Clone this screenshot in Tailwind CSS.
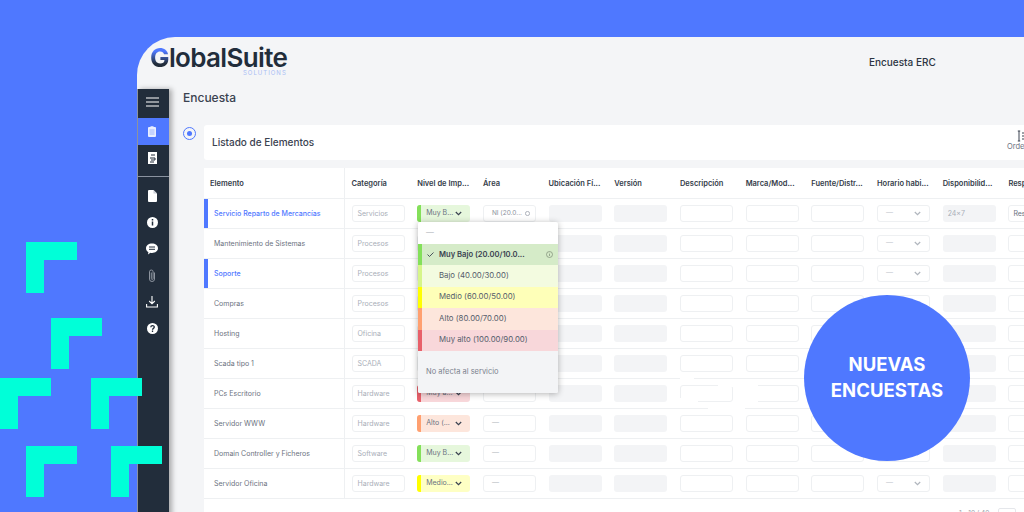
<!DOCTYPE html>
<html lang="es">
<head>
    <meta charset="UTF-8">
    <title>Encuesta ERC - GlobalSuite</title>
    <script src="https://cdn.jsdelivr.net/npm/@tailwindcss/browser@4"></script>
</head>
<body class="m-0">
    <div class="relative w-[1024px] h-[512px] overflow-hidden bg-[#4f78ff] font-['Inter',sans-serif]">

        <!-- ventana -->
        <div class="isolate absolute left-[137px] top-[37px] w-[900px] h-[500px] rounded-tl-[38px] bg-[#f4f5f7] flex flex-col overflow-hidden">
            <header class="h-[52px] shrink-0 flex">
                <div class="w-[180px] pl-[13px] pt-[5px] relative">
                    <div class="text-[26px] leading-[32px] font-semibold tracking-[-0.65px] text-[#222d3b] whitespace-nowrap"><span class="font-bold bg-linear-to-b from-[#4f78ff] from-30% to-[#222d3b] to-70% bg-clip-text text-transparent">G</span>lobalSuite</div>
                    <div class="absolute left-[106px] top-[32px] text-[6px] leading-[8px] tracking-[1px] text-[#a9bdf5]">SOLUTIONS</div>
                </div>
                <div class="ml-[552px] pt-[18px] text-[10px] leading-[14px] font-medium text-[#2b3442] whitespace-nowrap">Encuesta ERC</div>
            </header>

            <div class="flex flex-1 min-h-0">
                <aside class="w-[32px] shrink-0 bg-[#222d3b] border-l border-[#8b93a0] border-r-0 shadow-[3px_0_5px_rgba(0,0,0,0.3)] flex flex-col items-stretch z-10">
                    <div class="h-[29px] pb-[4px] pr-[2px] flex items-center justify-center">
                        <svg width="13" height="10" viewBox="0 0 13 10" fill="none" stroke="#fff" stroke-width="1.2"><path d="M0 1h13M0 5h13M0 9h13"/></svg>
                    </div>
                    <div class="h-[27px] pr-[3px] bg-[#4f78ff] flex items-center justify-center">
                        <svg width="8" height="11" viewBox="0 0 8 11"><path fill="#e9eeff" d="M1 1h1.500V.3h3V1H7a1 1 0 0 1 1 1v8a1 1 0 0 1-1 1H1a1 1 0 0 1-1-1V2a1 1 0 0 1 1-1z"/><path stroke="#8ea8fb" stroke-width=".8" d="M1.500 4h5M1.500 6h5M1.500 8h5"/></svg>
                    </div>
                    <div class="h-[32px] pb-[5px] pr-[3px] border-b border-[#8b93a0] flex items-center justify-center">
                        <svg width="9" height="12" viewBox="0 0 9 12"><path fill="#fff" d="M0 0h9v12H0z"/><path stroke="#222d3b" stroke-width="1" fill="none" d="M3 3h4M2 6h5v2H3M2 10h4"/></svg>
                    </div>
                    <div class="flex flex-col items-center pt-[5px] pr-[3px]">
                        <div class="h-[27px] flex items-center">
                            <svg width="9" height="12" viewBox="0 0 9 12"><path fill="#fff" d="M0 1a1 1 0 0 1 1-1h4.500L9 3.500V11a1 1 0 0 1-1 1H1a1 1 0 0 1-1-1z"/><path fill="#c9ced6" d="M5.500 0v3.500H9z"/></svg>
                        </div>
                        <div class="h-[26px] flex items-center">
                            <svg width="11" height="11" viewBox="0 0 11 11"><circle cx="5.500" cy="5.500" r="5.500" fill="#fff"/><path stroke="#222d3b" stroke-width="1.500" d="M5.500 4.500v4M5.500 2v1.400"/></svg>
                        </div>
                        <div class="h-[27px] flex items-center">
                            <svg width="12" height="12" viewBox="0 0 12 12"><path fill="#fff" d="M6 0.500c3.300 0 6 2 6 4.700s-2.700 4.700-6 4.700c-.6 0-1.100 0-1.600-.2L2 11.500l.4-2.400C.9 8.200 0 6.800 0 5.200 0 2.500 2.700.5 6 .5z"/><path stroke="#222d3b" stroke-width="1" d="M3 4h6M3 6.300h6"/></svg>
                        </div>
                        <div class="h-[27px] flex items-center">
                            <svg width="8" height="13" viewBox="0 0 8 13" fill="none" stroke="#8d949f" stroke-width="1"><path d="M6.500 3.500V10a2.500 2.500 0 0 1-5 0V2.800a1.800 1.800 0 0 1 3.600 0V9.500a.9.900 0 0 1-1.800 0V3.500"/></svg>
                        </div>
                        <div class="h-[26px] flex items-center">
                            <svg width="12" height="12" viewBox="0 0 12 12" fill="none" stroke="#fff" stroke-width="1.100"><path d="M6 0v7.500M3.200 5L6 7.800 8.800 5M.6 8v3h10.800V8"/></svg>
                        </div>
                        <div class="h-[27px] flex items-center">
                            <svg width="11" height="11" viewBox="0 0 11 11"><circle cx="5.500" cy="5.500" r="5.500" fill="#fff"/><path fill="none" stroke="#222d3b" stroke-width="1.300" d="M3.800 4.200c0-2.200 3.500-2.200 3.500-.1 0 1.300-1.800 1.300-1.800 2.700M5.500 7.600v1.300"/></svg>
                        </div>
                    </div>
                </aside>

                <main class="flex-1 min-w-0 flex flex-col">
                    <h1 class="h-[17px] pl-[14px] text-[12px] leading-[17px] font-medium text-[#3a4250]">Encuesta</h1>
                    <div class="flex mt-[19px]">
                        <div class="w-[35px] shrink-0 pl-[14px] pt-[2px]">
                            <div class="w-[13px] h-[13px] rounded-full border border-[#4f78ff] flex items-center justify-center">
                                <div class="w-[5px] h-[5px] rounded-full bg-[#4f78ff]"></div>
                            </div>
                        </div>
                        <div class="flex-1 min-w-0">
                            <div class="h-[35px] w-[900px] bg-white rounded-l-[3px] flex items-center pl-[8px] relative">
                                <span class="text-[10px] font-medium text-[#3a4250]">Listado de Elementos</span>
                                <div class="absolute left-[803px] top-[5px] w-[30px] flex flex-col items-start">
                                    <svg class="ml-[10px]" width="12" height="12" viewBox="0 0 12 12" fill="none" stroke="#3a4250" stroke-width="1"><path d="M2 1v10M.8 1h2.400M.8 11h2.400M5 3h7M5 6h7M5 9h7"/></svg>
                                    <span class="text-[7.500px] leading-[10px] text-[#6b7280]">Ordenar</span>
                                </div>
                            </div>
                            <div id="tabla" class="relative mt-[8px] w-[900px] h-[344px] bg-white"></div>
                        </div>
                    </div>
                </main>
            </div>
        </div>

        <!-- formas decorativas -->
        <svg class="absolute left-0 top-0 pointer-events-none" width="170" height="512" fill="#00ffd8">
            <path d="M26 242h51v18H44v33H26z"/>
            <path d="M51 318h51v18H69v33H51z"/>
            <path d="M0 378h51v18H18v33H0z"/>
            <path d="M91 378h51v18h-33v33H91z"/>
            <path d="M26 446h51v18H44v33H26z"/>
            <path d="M111 446h51v18h-33v33h-18z"/>
        </svg>

        <!-- retoques blancos que tapan las lineas -->
        <div class="absolute left-[680px] top-[376px] w-[14px] h-[6px] bg-white"></div>
        <div class="absolute left-[718px] top-[383px] w-[40px] h-[4px] bg-white"></div>
        <div class="absolute left-[745px] top-[383px] w-[13px] h-[20px] bg-white"></div>
        <div class="absolute left-[678px] top-[398px] w-[20px] h-[6px] bg-white"></div>
        <div class="absolute left-[708px] top-[406px] w-[37px] h-[4px] bg-white"></div>

        <div class="absolute left-[804px] top-[295px] w-[166px] h-[166px] rounded-full bg-[#4f78ff] flex flex-col items-center justify-center pb-[2px] text-white font-bold text-[18.500px] leading-[26px]">
            <span>NUEVAS</span>
            <span>ENCUESTAS</span>
        </div>
    </div>

    <script>
        const filas = [
            ['Servicio Reparto de Mercancías', 'Servicios', 'verde', 'Muy B...', true],
            ['Mantenimiento de Sistemas', 'Procesos'],
            ['Soporte', 'Procesos', null, null, true],
            ['Compras', 'Procesos'],
            ['Hosting', 'Oficina'],
            ['Scada tipo 1', 'SCADA'],
            ['PCs Escritorio', 'Hardware', 'rojo', 'Muy a...'],
            ['Servidor WWW', 'Hardware', 'naranja', 'Alto (...'],
            ['Domain Controller y Ficheros', 'Software', 'verde', 'Muy B...'],
            ['Servidor Oficina', 'Hardware', 'amarillo', 'Medio...'],
        ];
        const nivelClases = {
            verde: ['bg-[#e6f7dc]', 'bg-[#84e05a]'],
            rojo: ['bg-[#f8d7da]', 'bg-[#e8606a]'],
            naranja: ['bg-[#fde6dc]', 'bg-[#ffa070]'],
            amarillo: ['bg-[#feffc4]', 'bg-[#ffff00]'],
        };
        const chevron = '<svg width="7" height="5" viewBox="0 0 7 5" fill="none" stroke="currentColor" stroke-width="1.200"><path d="M.8 1l2.700 2.700L6.200 1"/></svg>';
        const caja = 'w-[53px] h-[17px] rounded-[3px] shrink-0';
        const vacio = `<div class="${caja} bg-white border border-[#eef0f2]"></div>`;
        const gris = (t = '') => `<div class="${caja} bg-[#f3f4f6] text-[7px] leading-[17px] pl-[5px] text-[#a8aeb8]">${t}</div>`;
        const celda = (html) => `<div class="flex items-center pl-[6.500px]">${html}</div>`;

        const cabeceras = ['Categoría', 'Nivel de Imp...', 'Área', 'Ubicación Fí...', 'Versión', 'Descripción', 'Marca/Mod...', 'Fuente/Distr...', 'Horario habi...', 'Disponibilid...', 'Responsable'];
        let html = `<div class="grid grid-cols-[141px_repeat(11,65.700px)] h-[31px] border-b border-[#eef0f2] text-[7.500px] font-semibold text-[#343c49]">
            <div class="flex items-center pl-[6px] pt-[1px] border-r border-[#eef0f2]">Elemento</div>
            ${cabeceras.map(c => `<div class="flex items-center pl-[6.500px] pt-[1px] whitespace-nowrap">${c}</div>`).join('')}
        </div>`;

        filas.forEach(([nombre, categoria, nivel, nivelTexto, activo], i) => {
            const nivelHtml = nivel
                ? `<div class="${caja} ${nivelClases[nivel][0]} flex items-center overflow-hidden text-[#6b7280]">
                       <div class="w-[4px] h-full ${nivelClases[nivel][1]}"></div>
                       <span class="pl-[5px] flex-1 text-[7px]">${nivelTexto}</span>
                       <span class="pr-[8px] text-[#3a4250]">${chevron}</span>
                   </div>`
                : vacio;
            const areaHtml = i === 0
                ? `<div class="${caja} bg-white border border-[#eef0f2] flex items-center justify-between pl-[8px] pr-[5px] text-[6.500px] whitespace-nowrap text-[#8a909b]"><span>NI (20.0...</span><svg width="5" height="5" viewBox="0 0 6 6" fill="none" stroke="#8a909b" stroke-width=".8"><circle cx="3" cy="3" r="2.500"/></svg></div>`
                : `<div class="${caja} bg-white border border-[#eef0f2] flex items-center pl-[8px] text-[7px] text-[#b4b9c1]">—</div>`;
            const horario = `<div class="${caja} bg-white border border-[#eef0f2] flex items-center justify-between pl-[8px] pr-[8px] text-[7px] text-[#c3c7ce]"><span>—</span><span class="text-[#b0b5bd]">${chevron}</span></div>`;
            html += `<div class="grid grid-cols-[141px_repeat(11,65.700px)] h-[30px] border-b border-[#eef0f2]">
                <div class="relative flex items-center pl-[10px] pt-[1px] border-r border-[#eef0f2] text-[7px] whitespace-nowrap ${activo ? 'font-medium text-[#4f78ff]' : 'text-[#6b7280]'}">
                    ${activo ? '<div class="absolute left-0 top-0 bottom-0 w-[4px] bg-[#4f78ff]"></div>' : ''}${nombre}
                </div>
                ${celda(`<div class="${caja} bg-white border border-[#eef0f2] pl-[5px] text-[7px] leading-[15px] text-[#a8aeb8]">${categoria}</div>`)}
                ${celda(nivelHtml)}
                ${celda(areaHtml)}
                ${celda(gris())}
                ${celda(gris())}
                ${celda(vacio)}
                ${celda(vacio)}
                ${celda(vacio)}
                ${celda(horario)}
                ${celda(gris(i === 0 ? '24x7' : ''))}
                ${celda(i === 0 ? `<div class="${caja} bg-white border border-[#eef0f2] pl-[4px] text-[7px] leading-[15px] text-[#6b7280]">Res</div>` : vacio)}
            </div>`;
        });

        // menu desplegable abierto sobre la primera fila
        const opciones = [
            ['Bajo (40.00/30.00)', 'bg-[#f3fbe0]', 'bg-[#d6f58a]'],
            ['Medio (60.00/50.00)', 'bg-[#feffb8]', 'bg-[#ffff00]'],
            ['Alto (80.00/70.00)', 'bg-[#fde6dc]', 'bg-[#ffa070]'],
            ['Muy alto (100.00/90.00)', 'bg-[#f8d7da]', 'bg-[#e8606a]'],
        ];
        html += `<div class="absolute left-[214px] top-[54px] w-[140px] h-[171px] rounded-[2px] bg-white shadow-[0_1px_6px_rgba(0,0,0,0.3)] flex flex-col overflow-hidden text-[7.800px] text-[#555d6b]">
            <div class="h-[22px] flex items-center pl-[8px] text-[#b4b9c1]">—</div>
            <div class="h-[21px] flex items-center bg-[#d5ebc8] text-[7.600px] font-semibold text-[#3a4250]">
                <div class="w-[4px] h-full bg-[#84e05a]"></div>
                <svg class="ml-[5px] w-[7px]" height="5" viewBox="0 0 7 5" fill="none" stroke="#3a4250" stroke-width=".9"><path d="M.5 2.500l2 2L6.500.5"/></svg>
                <span class="pl-[5px] flex-1 whitespace-nowrap">Muy Bajo (20.00/10.0...</span>
                <svg class="mr-[5px]" width="7" height="7" viewBox="0 0 7 7" fill="none" stroke="#7d8b76" stroke-width=".7"><circle cx="3.500" cy="3.500" r="3"/><path d="M3.500 3v2M3.500 1.800v.6"/></svg>
            </div>
            ${opciones.map(([t, fondo, barra]) => `<div class="h-[21.500px] flex items-center ${fondo}"><div class="w-[4px] h-full ${barra}"></div><span class="pl-[17px] whitespace-nowrap">${t}</span></div>`).join('')}
            <div class="flex-1 bg-[#f3f4f6] flex items-center pl-[8px] text-[7.500px] text-[#7b828e]">No afecta al servicio</div>
        </div>`;

        html += `<div class="absolute left-[755px] top-[340px] flex items-start gap-[9px] text-[6.500px] leading-[8px] text-[#9aa0aa]"><span class="pt-[1px]">1 - 10 / 40</span><div class="w-[18px] h-[10px] border border-[#e5e7eb] rounded-[2px]"></div></div>`;

        document.getElementById('tabla').innerHTML = html;
    </script>
</body>
</html>
